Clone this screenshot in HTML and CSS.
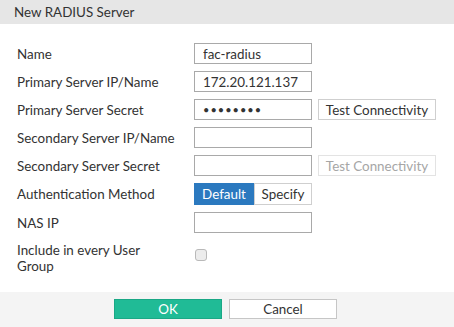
FILE: index.html
```html
<!DOCTYPE html>
<html lang="en">
<head>
<meta charset="UTF-8">
<title>New RADIUS Server</title>
<link rel="stylesheet" href="styles.css">
</head>
<body>

<div class="dialog">
    <!-- title bar -->
    <div class="dialog-title">New RADIUS Server</div>

    <!-- form body -->
    <form class="form">
        <label class="field-label" for="name">Name</label>
        <div class="field"><input id="name" class="text" type="text" value="fac-radius"></div>

        <label class="field-label" for="primary">Primary Server IP/Name</label>
        <div class="field"><input id="primary" class="text" type="text" value="172.20.121.137"></div>

        <label class="field-label" for="secret">Primary Server Secret</label>
        <div class="field">
            <input id="secret" class="text" type="password" value="password">
            <button type="button" class="btn-test">Test Connectivity</button>
        </div>

        <label class="field-label" for="secondary">Secondary Server IP/Name</label>
        <div class="field"><input id="secondary" class="text" type="text"></div>

        <label class="field-label" for="secret2">Secondary Server Secret</label>
        <div class="field">
            <input id="secret2" class="text" type="password">
            <button type="button" class="btn-test" disabled>Test Connectivity</button>
        </div>

        <span class="field-label">Authentication Method</span>
        <div class="field">
            <div class="toggle">
                <button type="button" class="toggle-btn active">Default</button>
                <button type="button" class="toggle-btn">Specify</button>
            </div>
        </div>

        <label class="field-label" for="nas">NAS IP</label>
        <div class="field"><input id="nas" class="text" type="text"></div>

        <label class="field-label tall" for="every">Include in every User Group</label>
        <div class="field"><input id="every" class="check" type="checkbox"></div>
    </form>

    <!-- footer buttons -->
    <div class="dialog-footer">
        <button type="button" class="btn btn-ok">OK</button>
        <button type="button" class="btn btn-cancel">Cancel</button>
    </div>
</div>

</body>
</html>
```

FILE: styles.css
```css
/* ===== base ===== */
*{box-sizing:border-box;margin:0;padding:0;}
body{
    font-family:Lato,"Open Sans",sans-serif;
    font-size:13.4px;
    color:#333;
    background:#fff;
}
button,input{font-family:inherit;font-size:13.4px;color:#333;}

/* ===== dialog shell ===== */
.dialog{
    height:327px;
    display:flex;
    flex-direction:column;
}
.dialog-title{
    height:24px;
    line-height:24px;
    padding-left:14px;
    background:#e6e6e6;
}

/* ===== form grid ===== */
.form{
    flex:1;
    display:grid;
    grid-template-columns:160px 1fr;
    column-gap:17px;
    row-gap:7px;
    align-content:start;
    padding:19px 17px 0;
}
.field-label{
    display:flex;
    align-items:center;
    min-height:21px;
    line-height:16px;
}
.field-label.tall{margin-top:2px;padding-right:20px;}
.field{
    display:flex;
    align-items:center;
    gap:6px;
}

/* text inputs */
.text{
    width:118px;
    height:21px;
    padding:0 8px;
    border:1px solid #a9a9a9;
    background:#fff;
}
.text:focus{outline:none;border-color:#2b79bf;}
.text[type="password"]{letter-spacing:1px;font-size:11px;}

/* test connectivity */
.btn-test{
    width:118px;
    height:21px;
    border:1px solid #cfcfcf;
    background:#fff;
    cursor:pointer;
}
.btn-test:disabled{color:#a6a6a6;border-color:#e3e3e3;cursor:default;}

/* default / specify toggle */
.toggle{display:flex;height:22px;}
.toggle-btn{
    width:58px;
    border:1px solid #cfcfcf;
    background:#fff;
    cursor:pointer;
}
.toggle-btn.active{
    width:60px;
    background:#2b79bf;
    border-color:#2b79bf;
    color:#fff;
}

/* checkbox */
.check{
    appearance:none;
    width:12px;
    height:12px;
    margin:0 0 4px 1px;
    border:1px solid #b9b9b9;
    border-radius:3px;
    background:#ececec;
    cursor:pointer;
}

/* ===== footer ===== */
.dialog-footer{
    height:35px;
    display:flex;
    justify-content:center;
    align-items:center;
    gap:7px;
    padding:0 3px 1px 0;
    background:#f4f4f4;
}
.btn{
    width:108px;
    height:20px;
    cursor:pointer;
}
.btn-ok{
    background:#20bb96;
    border:1px solid #1aa886;
    color:#fff;
}
.btn-cancel{
    background:#fff;
    border:1px solid #c6c6c6;
}
```
